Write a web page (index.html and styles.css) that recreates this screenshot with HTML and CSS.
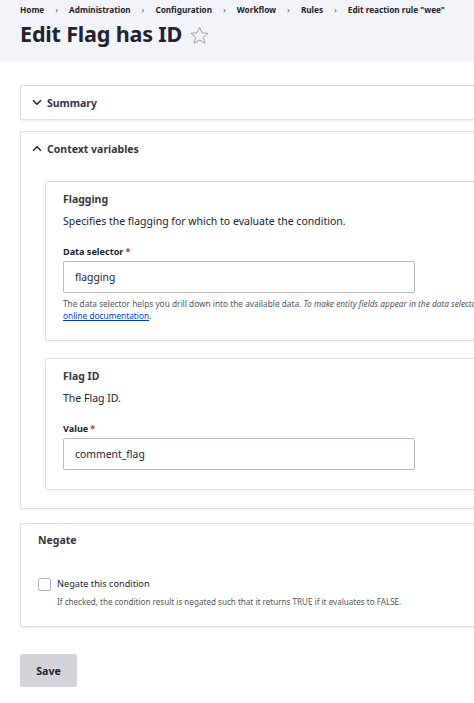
FILE: index.html
```html
<!DOCTYPE html>
<html>
<head>
<meta charset="utf-8">
<link rel="stylesheet" href="styles.css">
</head>
<body>
<div class="page">
<header class="page-header">
  <nav class="breadcrumb">
    <a>Home</a><span class="sep">›</span>
    <a>Administration</a><span class="sep">›</span>
    <a>Configuration</a><span class="sep">›</span>
    <a>Workflow</a><span class="sep">›</span>
    <a>Rules</a><span class="sep">›</span>
    <a>Edit reaction rule "wee"</a>
  </nav>
  <h1 class="title">Edit Flag has ID <svg class="star" width="19" height="19" viewBox="0 0 20 20"><path d="M10 1.3 L12.6 7.2 L19 7.7 L14.1 11.9 L15.6 18.2 L10 14.8 L4.4 18.2 L5.9 11.9 L1 7.7 L7.4 7.2 Z" fill="none" stroke="#9a9ba3" stroke-width="1" stroke-linejoin="round"/></svg></h1>
</header>
<main class="content">
  <section class="details closed">
    <div class="summary">
      <svg class="chev" width="10" height="7" viewBox="0 0 10 7"><path d="M1 1.2 L5 5.2 L9 1.2" fill="none" stroke="#222330" stroke-width="1.5"/></svg>
      <span>Summary</span>
    </div>
  </section>
  <section class="details open">
    <div class="summary">
      <svg class="chev" width="10" height="7" viewBox="0 0 10 7"><path d="M1 5.8 L5 1.8 L9 5.8" fill="none" stroke="#222330" stroke-width="1.5"/></svg>
      <span>Context variables</span>
    </div>
    <div class="details-body">
      <fieldset class="card">
        <div class="card-title">Flagging</div>
        <p class="card-desc">Specifies the flagging for which to evaluate the condition.</p>
        <label class="label">Data selector<span class="req">*</span></label>
        <div class="input">flagging</div>
        <p class="help"><span class="nowrap">The data selector helps you drill down into the available data. <em>To make entity fields appear in the data selector, you may have to use the condition 'entity has field'. For more details see the</em></span><br><a class="link">online documentation</a>.</p>
      </fieldset>
      <fieldset class="card card-second">
        <div class="card-title">Flag ID</div>
        <p class="card-desc">The Flag ID.</p>
        <label class="label">Value<span class="req">*</span></label>
        <div class="input">comment_flag</div>
      </fieldset>
    </div>
  </section>
  <section class="details negate">
    <div class="negate-title">Negate</div>
    <div class="check-row">
      <span class="checkbox"></span>
      <span class="check-label">Negate this condition</span>
    </div>
    <p class="check-help">If checked, the condition result is negated such that it returns TRUE if it evaluates to FALSE.</p>
  </section>
  <div class="actions">
    <button class="btn">Save</button>
  </div>
</main>
</div>
</body>
</html>
```
FILE: styles.css
```css
html, body {
  margin: 0;
  padding: 0;
}
body {
  font-family: "Noto Sans", "Open Sans", sans-serif;
  color: #222330;
  background: #fff;
}
.page {
  width: 474px;
  overflow: hidden;
}
.page-header {
  background: #f3f4f9;
  padding: 3px 20px 0 20px;
  height: 59px;
}
.breadcrumb {
  font-size: 8.2px;
  font-weight: 700;
  line-height: 14px;
  white-space: nowrap;
  display: flex;
  align-items: center;
}
.breadcrumb a { color: #222330; }
.sep {
  font-weight: 400;
  margin: 0 11px;
  color: #55565b;
  font-size: 9px;
}
.title {
  margin: 2px 0 0 0;
  font-size: 21.6px;
  font-weight: 700;
  line-height: 30px;
  letter-spacing: -0.2px;
  display: flex;
  align-items: center;
  white-space: nowrap;
}
.star {
  margin-left: 8px;
  margin-top: 2px;
}
.content {
  padding: 23px 0 0 20px;
  width: 560px;
}
.details {
  border: 1px solid #dedfe4;
  border-radius: 2px;
  box-shadow: 0 1px 3px rgba(0,0,0,0.08);
  margin-bottom: 11px;
  background: #fff;
}
.summary {
  display: flex;
  align-items: center;
  height: 33px;
  padding-left: 11px;
  font-size: 10.5px;
  font-weight: 700;
  color: #35363d;
}
.chev { margin-right: 5px; }
.details-body {
  padding: 16px 0 18px 24px;
}
.card {
  margin: 0;
  border: 1px solid #dedfe4;
  border-radius: 2px;
  box-shadow: 0 1px 3px rgba(0,0,0,0.06);
  padding: 9px 17px 18px 17px;
  min-inline-size: 0;
}
.card-second {
  margin-top: 17px;
  padding-bottom: 19px;
}
.card-title {
  font-size: 10.5px;
  font-weight: 700;
  line-height: 16px;
  color: #35363d;
}
.card-desc {
  margin: 7px 0 0 0;
  font-size: 10.5px;
  line-height: 15px;
  color: #222330;
}
.label {
  display: block;
  margin-top: 16px;
  font-size: 9.1px;
  font-weight: 700;
  line-height: 13px;
}
.req {
  color: #d72222;
  margin-left: 2px;
}
.input {
  margin-top: 3px;
  height: 30px;
  border: 1px solid #b8bac2;
  border-radius: 2px;
  padding-left: 11px;
  font-size: 10.4px;
  line-height: 30px;
  width: 339px;
}
.help {
  margin: 5px 0 0 0;
  font-size: 8.3px;
  line-height: 12px;
  color: #55565b;
}
.nowrap { white-space: nowrap; }
.help em { font-style: italic; }
.link {
  color: #003ecc;
  text-decoration: underline;
}
.negate {
  margin-top: 14px;
  padding: 8px 17px 18px 17px;
}
.negate-title {
  font-size: 10.5px;
  font-weight: 700;
  line-height: 16px;
  color: #35363d;
}
.check-row {
  display: flex;
  align-items: center;
  margin-top: 29px;
  height: 14px;
}
.checkbox {
  width: 11px;
  height: 11px;
  border: 1px solid #b0b2ba;
  border-radius: 2px;
  margin-right: 6px;
}
.check-label {
  font-size: 9.2px;
  line-height: 14px;
}
.check-help {
  margin: 5px 0 0 19px;
  font-size: 8.1px;
  line-height: 12px;
  color: #55565b;
}
.actions {
  padding-top: 16px;
}
.btn {
  font-family: "Noto Sans", "Open Sans", sans-serif;
  background: #d3d4d9;
  border: none;
  border-radius: 2px;
  width: 57px;
  height: 33px;
  font-size: 10.6px;
  font-weight: 700;
  color: #222330;
  padding: 0;
}
```
